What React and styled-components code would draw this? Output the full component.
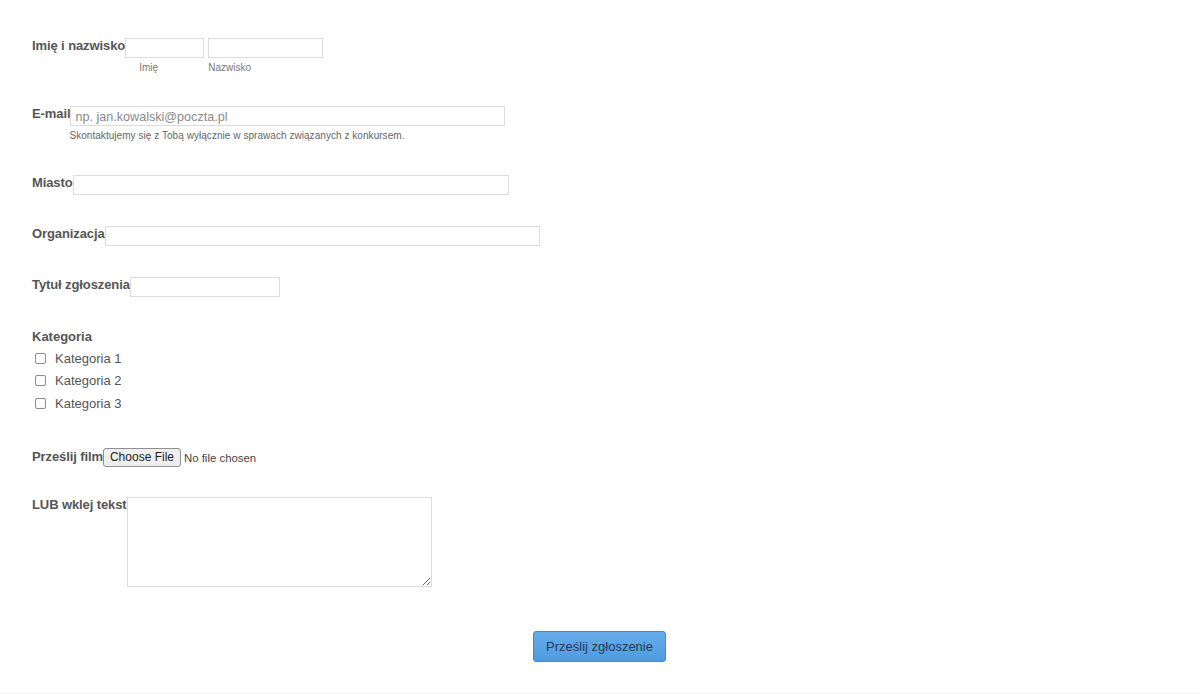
import React, { useState } from 'react';
import styled, { createGlobalStyle } from 'styled-components';

const GlobalStyle = createGlobalStyle`
  html, body {
    margin: 0;
    padding: 0;
    background: #fff;
    font-family: "Liberation Sans", Arial, sans-serif;
  }
  * {
    box-sizing: border-box;
  }
`;

const Page = styled.div`
  min-height: 100vh;
  padding: 38px 32px 0;
  border-bottom: 1px solid #f1f1f1;
`;

const Form = styled.form`
  display: flex;
  flex-direction: column;
`;

const Field = styled.div`
  display: flex;
  align-items: ${p => (p.$center ? 'center' : 'flex-start')};
  margin-top: ${p => p.$top || 0}px;
`;

const Label = styled.label`
  font-size: 13px;
  font-weight: bold;
  line-height: 16px;
  letter-spacing: -0.1px;
  color: #555;
  white-space: nowrap;
`;

const Column = styled.div`
  display: flex;
  flex-direction: column;
`;

const Pair = styled.div`
  display: flex;
  gap: 4px;
`;

const TextInput = styled.input`
  width: ${p => p.$width}px;
  height: 20px;
  margin: 0;
  padding: 0 4px;
  border: 1px solid #dcdcdc;
  border-radius: 0;
  background: #fff;
  font-family: "Liberation Sans", Arial, sans-serif;
  font-size: 13px;
  color: #555;
  outline: none;

  &::placeholder {
    color: #8a8a8a;
    font-size: 12.6px;
  }
`;

const SubLabel = styled.span`
  margin-left: ${p => p.$indent || 0}px;
  width: ${p => p.$width}px;
  padding-top: 4px;
  font-size: 10px;
  line-height: 12px;
  color: #777;
`;

const Hint = styled.span`
  margin-left: -1px;
  padding-top: 4px;
  font-size: 10px;
  line-height: 12px;
  letter-spacing: 0.05px;
  color: #666;
`;

const Heading = styled.div`
  margin-top: 32px;
  font-size: 13px;
  font-weight: bold;
  line-height: 16px;
  color: #555;
`;

const Options = styled.div`
  display: flex;
  flex-direction: column;
  margin-top: 2px;
`;

const Option = styled.label`
  display: flex;
  align-items: center;
  height: 22.5px;
  font-size: 13px;
  color: #555;
`;

const Box = styled.input`
  appearance: none;
  width: 11px;
  height: 11px;
  margin: 0 9px 0 3px;
  border: 1px solid #8d8d8d;
  border-radius: 2px;
  background: #fff;

  &:checked {
    background: #4f9be0;
    border-color: #3e88cb;
  }
`;

const FileInput = styled.input`
  margin: 0;
  font-family: "Liberation Sans", Arial, sans-serif;
  font-size: 11.4px;
  color: #444;

  &::file-selector-button {
    height: 19px;
    margin: 0 3px 0 0;
    padding: 0 6px;
    font-family: "Liberation Sans", Arial, sans-serif;
    font-size: 12px;
    color: #222;
    background: #efefef;
    border: 1px solid #8f8f8f;
    border-radius: 3px;
  }
`;

const TextArea = styled.textarea`
  width: 305px;
  height: 90px;
  margin: 0;
  padding: 4px;
  border: 1px solid #dcdcdc;
  font-family: "Liberation Sans", Arial, sans-serif;
  font-size: 13px;
  color: #555;
  outline: none;
`;

const Actions = styled.div`
  display: flex;
  justify-content: center;
  margin-top: 44px;
  padding-right: 1px;
`;

const Submit = styled.button`
  width: 133px;
  height: 31px;
  padding: 0;
  border: 1px solid #3e88cb;
  border-radius: 3px;
  background: linear-gradient(#66aceb, #4f9be0);
  font-family: "Liberation Sans", Arial, sans-serif;
  font-size: 13px;
  color: #2a3a52;
  cursor: pointer;
`;

const categories = ['Kategoria 1', 'Kategoria 2', 'Kategoria 3'];

const App = () => {
  const [checked, setChecked] = useState({});

  function onToggle(name) {
    setChecked({ ...checked, [name]: !checked[name] });
  }

  return (
    <Page>
      <GlobalStyle />
      <Form onSubmit={e => e.preventDefault()}>
        <Field>
          <Label>Imię i nazwisko</Label>
          <Column>
            <Pair>
              <TextInput $width={79} />
              <TextInput $width={115} />
            </Pair>
            <Pair>
              <SubLabel $indent={14} $width={65}>Imię</SubLabel>
              <SubLabel $width={115}>Nazwisko</SubLabel>
            </Pair>
          </Column>
        </Field>

        <Field $top={32}>
          <Label>E-mail</Label>
          <Column>
            <TextInput $width={435} placeholder="np. jan.kowalski@poczta.pl" />
            <Hint>Skontaktujemy się z Tobą wyłącznie w sprawach związanych z konkursem.</Hint>
          </Column>
        </Field>

        <Field $top={33}>
          <Label>Miasto</Label>
          <TextInput $width={436} />
        </Field>

        <Field $top={31}>
          <Label>Organizacja</Label>
          <TextInput $width={435} />
        </Field>

        <Field $top={31}>
          <Label>Tytuł zgłoszenia</Label>
          <TextInput $width={150} />
        </Field>

        <Heading>Kategoria</Heading>
        <Options>
          {categories.map(name => (
            <Option key={name}>
              <Box type="checkbox" checked={!!checked[name]} onChange={() => onToggle(name)} />
              {name}
            </Option>
          ))}
        </Options>

        <Field $top={33} $center>
          <Label>Prześlij film</Label>
          <FileInput type="file" />
        </Field>

        <Field $top={30}>
          <Label>LUB wklej tekst</Label>
          <TextArea />
        </Field>

        <Actions>
          <Submit type="submit">Prześlij zgłoszenie</Submit>
        </Actions>
      </Form>
    </Page>
  );
};

export default App;
